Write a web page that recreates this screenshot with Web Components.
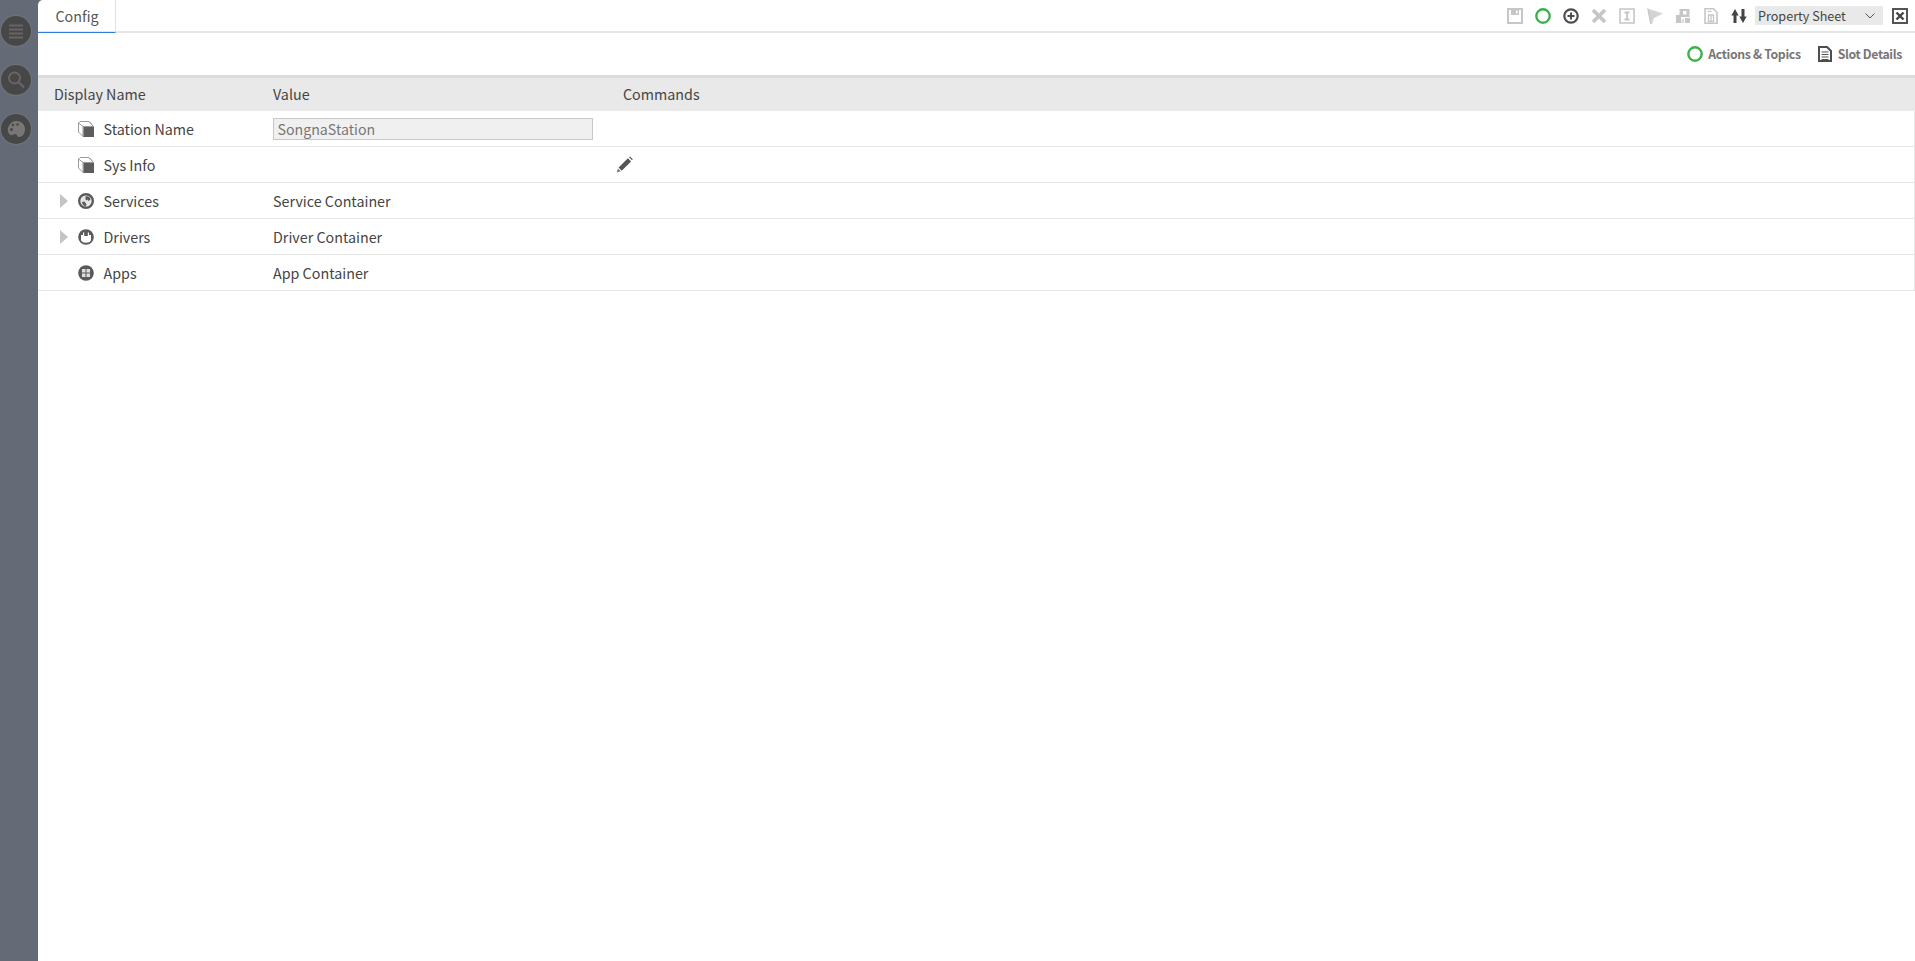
<!DOCTYPE html>
<html>
<head>
<meta charset="utf-8">
<title>Config</title>
<style>
    html, body { margin: 0; height: 100%; background: #646b76; }
    body { font-family: "Noto Sans CJK KR", Lato, sans-serif; font-size: 14.3px; color: #444; overflow: hidden; }
</style>
</head>
<body>
<app-shell>
    <side-nav slot="nav">
        <nav-button icon="menu"></nav-button>
        <nav-button icon="search"></nav-button>
        <nav-button icon="palette"></nav-button>
    </side-nav>
    <tab-bar slot="tabs"></tab-bar>
    <action-bar slot="actions"></action-bar>
    <sheet-table slot="table">
        <sheet-row name="Station Name" icon="cube"><value-input slot="value" value="SongnaStation"></value-input></sheet-row>
        <sheet-row name="Sys Info" icon="cube"><tool-icon slot="commands" icon="pencil" size="18"></tool-icon></sheet-row>
        <sheet-row name="Services" icon="services" expandable><span slot="value">Service Container</span></sheet-row>
        <sheet-row name="Drivers" icon="drivers" expandable><span slot="value">Driver Container</span></sheet-row>
        <sheet-row name="Apps" icon="apps"><span slot="value">App Container</span></sheet-row>
    </sheet-table>
</app-shell>

<script>
const ICONS = {
    save: '<path d="M1 1h14v14H1z" fill="none" stroke="#c6c6c6" stroke-width="2"/><path d="M4 1h8v6H4z" fill="#c6c6c6"/><path d="M9 2.500h1.500v3H9z" fill="#fff"/>',
    ring: '<circle cx="8" cy="8" r="6.700" fill="none" stroke="#3cb14a" stroke-width="2.400"/>',
    plus: '<circle cx="8" cy="8" r="6.700" fill="none" stroke="#4d4d4d" stroke-width="2.200"/><path d="M8 4.500v7M4.500 8h7" stroke="#4d4d4d" stroke-width="2"/>',
    cross: '<path d="M2 2l12 12M14 2L2 14" stroke="#c6c6c6" stroke-width="3.800"/>',
    slotbox: '<path d="M1 1h14v14H1z" fill="none" stroke="#c6c6c6" stroke-width="1.600"/><path d="M5.500 4.500h5M5.500 11.500h5M8 4.500v7" stroke="#c6c6c6" stroke-width="1.800"/>',
    flag: '<path d="M.5 .5l15.500 5-9 4.500-2 6-1 0z" fill="#d4d4d4"/><path d="M.8 .5l3 15.500" stroke="#c6c6c6" stroke-width="1.200"/>',
    tree: '<path d="M4.500 1h10v8h-10z" fill="#c6c6c6"/><path d="M8 3h3.500v3.500H8z" fill="#fff"/><path d="M1 7h5v8H1zM10 10h5v5h-5z" fill="#c6c6c6"/><path d="M6.500 11h2.500v4H6.500z" fill="#dcdcdc"/>',
    slotdoc: '<path d="M2 .8h8.500L14 4.300V15.200H2z" fill="none" stroke="#c6c6c6" stroke-width="1.600"/><path d="M5.500 7h5v6.500h-5z" fill="none" stroke="#c6c6c6" stroke-width="1.300"/><path d="M8 7.500v5.500" stroke="#c6c6c6" stroke-width="1.300"/><path d="M4.500 3.500h4" stroke="#c6c6c6" stroke-width="1.300"/>',
    updown: '<path d="M4 1L.3 7.500H2.500V15h3V7.500h2.200z" fill="#444"/><path d="M12 15l3.700-6.500H13.500V1h-3v7.500H8.300z" fill="#444"/>',
    close: '<path d="M1 1h14v14H1z" fill="none" stroke="#555" stroke-width="2"/><path d="M4.500 4.500l7 7M11.500 4.500l-7 7" stroke="#444" stroke-width="2.400"/>',
    doc: '<path d="M2 1h8l4 4v10H2z" fill="#fff" stroke="#4d4d4d" stroke-width="2"/><path d="M4.500 6h7M4.500 8.500h7M4.500 11h7M4.500 13.500h7" stroke="#555" stroke-width="1.200"/>',
    pencil: '<path d="M11.500 2l2.800 2.800L6 13l-2.800-2.800z" fill="#555"/><path d="M12.500 1l.8-.6 2.500 2.500-.6.800z" fill="#555"/><path d="M2.600 11l2.600 2.600-3.600 1z" fill="#777"/>',
    cube: '<path d="M.5 2L2 .5h9L15.500 5.500 15.500 15.500H5L.5 11z" fill="#fff" stroke="#999" stroke-width="1"/><path d="M.5 2L5 5.500V15.500M5 5.500h11M11 .5L15.500 5.500" fill="none" stroke="#999" stroke-width="1"/><path d="M5.500 6H16V16H5.500z" fill="#5c5c5c"/>',
    services: '<circle cx="8" cy="8" r="6.800" fill="none" stroke="#5a5a5a" stroke-width="2.400"/><circle cx="8" cy="8" r="5" fill="#e4e4e4"/><path d="M7.500 3.500c2-.8 4.800.4 5 3l-2 1.500-1-1.500-1.500 1-.5-2zM4 9l2.500-.5 2 3-1 2C5.500 13 4 11 4 9z" fill="#5a5a5a"/>',
    drivers: '<circle cx="8" cy="8" r="7.800" fill="#5a5a5a"/><path d="M3 6h2V3.500h1.200V7h3.600V3.500H11V6h2v5c0 1.500-2.200 2.800-5 2.800S3 12.500 3 11z" fill="#fff"/>',
    apps: '<circle cx="8" cy="8" r="7.800" fill="#5a5a5a"/><path d="M4 4h3.500v3.500H4zM8.500 4H12v3.500H8.500zM4 8.500h3.500V12H4zM8.500 8.500H12V12H8.500z" fill="#ddd"/>'
};

function iconSvg(name, size) {
    return `<svg width="${size}" height="${size}" viewBox="0 0 16 16" style="display:block">${ICONS[name]}</svg>`;
}

class AppShell extends HTMLElement {
    constructor() {
        super();
        this.attachShadow({ mode: 'open' });
    }

    connectedCallback() {
        this.shadowRoot.innerHTML = `
            <style>
                :host { display: flex; height: 961px; }
                .nav { flex: 0 0 38px; }
                main {
                    flex: 1;
                    background: #fff;
                    border-top-left-radius: 5px;
                    display: flex;
                    flex-direction: column;
                    min-width: 0;
                }
            </style>
            <div class="nav"><slot name="nav"></slot></div>
            <main>
                <slot name="tabs"></slot>
                <slot name="actions"></slot>
                <slot name="table"></slot>
            </main>
        `;
    }
}

class SideNav extends HTMLElement {
    constructor() {
        super();
        this.attachShadow({ mode: 'open' });
    }

    connectedCallback() {
        this.shadowRoot.innerHTML = `
            <style>
                :host { display: flex; flex-direction: column; gap: 19px; padding: 16px 0 0 1px; }
            </style>
            <slot></slot>
        `;
    }
}

class NavButton extends HTMLElement {
    constructor() {
        super();
        this.attachShadow({ mode: 'open' });
    }

    connectedCallback() {
        const shapes = {
            menu: '<path d="M8 9.500h14M8 13.500h14M8 17.500h14M8 21.500h14" stroke="#666" stroke-width="2.200"/>',
            search: '<circle cx="13.500" cy="13" r="5.500" fill="none" stroke="#666" stroke-width="2"/><path d="M17.500 17l5.500 5.500" stroke="#666" stroke-width="2.200"/>',
            palette: '<path d="M15 7c5 0 9 3 9 8 0 5-3 8-6 8-2 0-1.500-2.500-3.500-3-2-.5-3 2-5 1-2.500-1.500-3.500-5-2-8.500C9 9 12 7 15 7z" fill="#777"/><circle cx="12" cy="11" r="1.300" fill="#474747"/><circle cx="16.500" cy="10.500" r="1.300" fill="#474747"/><circle cx="10.500" cy="15.500" r="1.500" fill="#474747"/>'
        };
        this.shadowRoot.innerHTML = `
            <style>
                :host {
                    display: block;
                    width: 30px;
                    height: 30px;
                    border-radius: 50%;
                    background: #474747;
                    box-shadow: 0 0 0 1px #6f747c;
                }
            </style>
            <svg width="30" height="30" viewBox="0 0 30 30">${shapes[this.getAttribute('icon')]}</svg>
        `;
    }
}

class ToolIcon extends HTMLElement {
    constructor() {
        super();
        this.attachShadow({ mode: 'open' });
    }

    connectedCallback() {
        const size = this.getAttribute('size') || 16;
        this.shadowRoot.innerHTML = `
            <style>
                :host { display: block; flex: none; width: ${size}px; height: ${size}px; }
            </style>
            ${iconSvg(this.getAttribute('icon'), size)}
        `;
    }
}

class TabBar extends HTMLElement {
    constructor() {
        super();
        this.attachShadow({ mode: 'open' });
    }

    connectedCallback() {
        const tools = ['save', 'ring', 'plus', 'cross', 'slotbox', 'flag', 'tree', 'slotdoc', 'updown'];
        this.shadowRoot.innerHTML = `
            <style>
                :host {
                    display: flex;
                    align-items: stretch;
                    justify-content: space-between;
                    height: 31px;
                    border-bottom: 2px solid #e6e6e6;
                }
                .tab {
                    width: 78px;
                    margin-bottom: -2px;
                    border-right: 1px solid #e2e2e2;
                    border-bottom: 1px solid #2f7bd9;
                    box-sizing: border-box;
                    height: 33px;
                    line-height: 31px;
                    padding-left: 1px;
                    text-align: center;
                    color: #555;
                    font-size: 14.300px;
                }
                .tools { display: flex; align-items: center; gap: 12px; padding-right: 7px; }
                .select {
                    width: 128px;
                    height: 19px;
                    margin-left: -4px;
                    background: #e9e9e9;
                    display: flex;
                    align-items: center;
                    justify-content: space-between;
                    padding: 0 8px 0 3px;
                    box-sizing: border-box;
                    line-height: 19px;
                    color: #444;
                    font-size: 12.600px;
                }
                .close { margin-left: -3px; }
            </style>
            <div class="tab">Config</div>
            <div class="tools">
                ${tools.map(t => `<tool-icon icon="${t}"></tool-icon>`).join('')}
                <div class="select">
                    <span>Property Sheet</span>
                    <svg width="10" height="6" viewBox="0 0 10 6"><path d="M.5.500L5 5 9.500.500" fill="none" stroke="#555" stroke-width="1"/></svg>
                </div>
                <tool-icon class="close" icon="close"></tool-icon>
            </div>
        `;
    }
}

class ActionBar extends HTMLElement {
    constructor() {
        super();
        this.attachShadow({ mode: 'open' });
    }

    connectedCallback() {
        this.shadowRoot.innerHTML = `
            <style>
                :host {
                    display: flex;
                    justify-content: flex-end;
                    align-items: center;
                    height: 42px;
                    padding-right: 13px;
                    color: #777;
                    font-weight: 700;
                    font-size: 12.300px;
                    letter-spacing: -0.35px;
                }
                .item { display: flex; align-items: center; gap: 5px; margin-left: 16px; }
            </style>
            <div class="item"><tool-icon icon="ring"></tool-icon><span>Actions &amp; Topics</span></div>
            <div class="item"><tool-icon icon="doc"></tool-icon><span>Slot Details</span></div>
        `;
    }
}

class SheetTable extends HTMLElement {
    constructor() {
        super();
        this.attachShadow({ mode: 'open' });
    }

    connectedCallback() {
        this.shadowRoot.innerHTML = `
            <style>
                :host { display: block; }
                .head {
                    display: grid;
                    grid-template-columns: 219px 350px 1fr;
                    height: 36px;
                    align-items: center;
                    padding: 0 0 3px 16px;
                    background: #e9e9e9;
                    border-top: 3px solid #dcdcdc;
                    box-sizing: border-box;
                    font-size: 14.300px;
                    color: #444;
                }
                .body { border-right: 1px solid #e6e6e6; }
            </style>
            <div class="head"><span>Display Name</span><span>Value</span><span>Commands</span></div>
            <div class="body"><slot></slot></div>
        `;
    }
}

class SheetRow extends HTMLElement {
    constructor() {
        super();
        this.attachShadow({ mode: 'open' });
    }

    connectedCallback() {
        const name = this.getAttribute('name');
        const icon = this.getAttribute('icon');
        const arrow = this.hasAttribute('expandable')
            ? '<svg width="8" height="14" viewBox="0 0 8 14" style="display:block"><path d="M0 0l8 7-8 7z" fill="#c4c4c4"/></svg>'
            : '';
        this.shadowRoot.innerHTML = `
            <style>
                :host {
                    display: grid;
                    grid-template-columns: 235px 350px 1fr;
                    height: 36px;
                    box-sizing: border-box;
                    align-items: center;
                    border-bottom: 1px solid #e6e6e6;
                    font-size: 14.300px;
                    color: #444;
                }
                .name { display: flex; align-items: center; }
                .arrow { width: 8px; height: 14px; margin-left: 22px; margin-right: 10px; }
                .label { margin-left: 9.500px; }
                .commands { margin-left: -8px; }
            </style>
            <div class="name">
                <div class="arrow">${arrow}</div>
                <tool-icon icon="${icon}"></tool-icon>
                <span class="label">${name}</span>
            </div>
            <div class="value"><slot name="value"></slot></div>
            <div class="commands"><slot name="commands"></slot></div>
        `;
    }
}

class ValueInput extends HTMLElement {
    constructor() {
        super();
        this.attachShadow({ mode: 'open' });
    }

    connectedCallback() {
        this.shadowRoot.innerHTML = `
            <style>
                :host {
                    display: block;
                    width: 320px;
                    height: 22px;
                    box-sizing: border-box;
                    background: #f0f0f0;
                    border: 1px solid #c8c8c8;
                    padding-left: 3.500px;
                    line-height: 20px;
                    color: #777;
                    font-size: 14.200px;
                }
            </style>
            ${this.getAttribute('value')}
        `;
    }
}

customElements.define('app-shell', AppShell);
customElements.define('side-nav', SideNav);
customElements.define('nav-button', NavButton);
customElements.define('tool-icon', ToolIcon);
customElements.define('tab-bar', TabBar);
customElements.define('action-bar', ActionBar);
customElements.define('sheet-table', SheetTable);
customElements.define('sheet-row', SheetRow);
customElements.define('value-input', ValueInput);
</script>
</body>
</html>
